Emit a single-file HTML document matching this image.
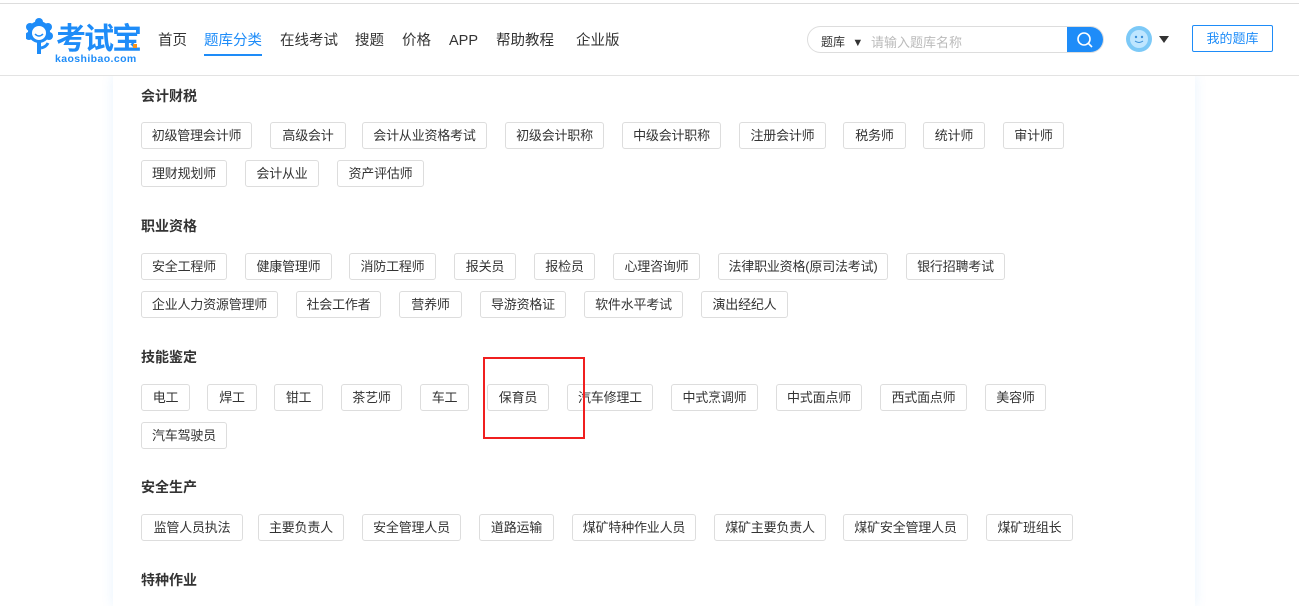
<!DOCTYPE html>
<html><head><meta charset="utf-8"><style>
*{margin:0;padding:0;box-sizing:border-box}
body{width:1299px;height:601px;overflow:hidden;background:#fff;font-family:"Liberation Sans","Noto Sans CJK SC",sans-serif;color:#333;position:relative}
.top{position:absolute;top:3px;left:0;width:1299px;height:1px;background:#ddd}
.hdr{position:absolute;top:4px;left:0;width:1299px;height:72px;border-bottom:1px solid #e3e3e3;background:#fff;z-index:2}
.nav span{position:absolute;top:29px;font-size:14.5px;line-height:17px;color:#333;white-space:nowrap}
.nav .on{color:#1e8cf8;border-bottom:2px solid #1e8cf8;padding-bottom:4px}
.search{position:absolute;left:807px;top:22px;width:297px;height:27px;border:1px solid #ddd;border-radius:14px;overflow:hidden;font-size:12px}
.search .b{position:absolute;right:0;top:0;width:36px;height:27px;background:#1e8cf8}
.card{position:absolute;left:113px;top:76px;width:1082px;height:530px;background:#fff;box-shadow:0 0 12px rgba(30,140,248,.10)}
h3{position:absolute;left:141px;font-size:14px;font-weight:bold;line-height:16px;color:#333}
.t{position:absolute;height:27px;line-height:25px;border:1px solid #ddd;border-radius:3px;font-size:13px;color:#333;white-space:nowrap;text-align:center;letter-spacing:-.2px}
.red{position:absolute;left:483px;top:357px;width:102px;height:82px;border:2px solid #f01f1f;z-index:5}
</style></head><body>
<div class="top"></div>
<div class="hdr">
 <svg style="position:absolute;left:26px;top:14px" width="114" height="46" viewBox="0 0 114 46">
  <g fill="#1e8cf8"><circle cx="13" cy="14" r="11"/><circle cx="4" cy="9" r="4"/><circle cx="22" cy="9" r="4"/><circle cx="13" cy="4" r="4"/><circle cx="3" cy="18" r="4"/><circle cx="23" cy="18" r="4"/><rect x="11" y="23" width="4" height="13"/><path d="M15 30 q5 -1 7 -5" stroke="#1e8cf8" stroke-width="3" fill="none"/></g>
  <circle cx="13" cy="15" r="7" fill="#fff"/><path d="M9 16 q4 4 8 0" stroke="#1e8cf8" stroke-width="1.5" fill="none"/>
  <text x="30" y="31" font-size="30" font-weight="bold" fill="#1e8cf8" font-family="Noto Sans CJK SC,sans-serif" letter-spacing="-2">考试宝</text>
  <rect x="107" y="26" width="4" height="4" fill="#f7931e"/>
  <text x="29" y="44" font-size="10.5" font-weight="bold" fill="#1e8cf8" font-family="Liberation Sans,sans-serif" letter-spacing=".4">kaoshibao.com</text>
 </svg>
 <div class="nav"><span style="left:158px">首页</span><span class="on" style="left:204px">题库分类</span><span style="left:280px">在线考试</span><span style="left:355px">搜题</span><span style="left:402px">价格</span><span style="left:449px">APP</span><span style="left:496px">帮助教程</span><span style="left:576px">企业版</span></div>
 <div class="search"><span style="position:absolute;left:13px;top:6px;color:#333">题库 <span style="font-size:11px;margin-left:4px">▼</span></span><span style="position:absolute;left:63px;top:5px;color:#bbb;font-size:13px">请输入题库名称</span>
  <div class="b"><svg width="36" height="27"><circle cx="17" cy="12" r="6" stroke="#fff" stroke-width="1.6" fill="none"/><path d="M21 16l4 4" stroke="#fff" stroke-width="1.6"/></svg></div></div>
 <svg style="position:absolute;left:1126px;top:22px" width="50" height="28"><circle cx="13" cy="13" r="13" fill="#7cc9f7"/><circle cx="13" cy="13" r="9" fill="#bfe6ff"/><circle cx="10" cy="11" r="1.2" fill="#3a8fd8"/><circle cx="16" cy="11" r="1.2" fill="#3a8fd8"/><path d="M9 15q4 3 8 0" stroke="#3a8fd8" fill="none"/><path d="M33 10h10l-5 7z" fill="#333"/></svg>
 <div style="position:absolute;left:1192px;top:21px;width:81px;height:27px;border:1px solid #1e8cf8;border-radius:2px;color:#1e8cf8;font-size:13px;line-height:25px;text-align:center">我的题库</div>
</div>
<div class="card"></div>

<h3 style="top:88px">会计财税</h3>
<div class="t" style="left:141px;top:122px;width:111px">初级管理会计师</div>
<div class="t" style="left:270px;top:122px;width:76px">高级会计</div>
<div class="t" style="left:362px;top:122px;width:125px">会计从业资格考试</div>
<div class="t" style="left:505px;top:122px;width:99px">初级会计职称</div>
<div class="t" style="left:622px;top:122px;width:99px">中级会计职称</div>
<div class="t" style="left:739px;top:122px;width:87px">注册会计师</div>
<div class="t" style="left:843px;top:122px;width:63px">税务师</div>
<div class="t" style="left:923px;top:122px;width:62px">统计师</div>
<div class="t" style="left:1003px;top:122px;width:61px">审计师</div>
<div class="t" style="left:141px;top:160px;width:86px">理财规划师</div>
<div class="t" style="left:245px;top:160px;width:74px">会计从业</div>
<div class="t" style="left:337px;top:160px;width:87px">资产评估师</div>

<h3 style="top:218px">职业资格</h3>
<div class="t" style="left:141px;top:253px;width:86px">安全工程师</div>
<div class="t" style="left:245px;top:253px;width:87px">健康管理师</div>
<div class="t" style="left:349px;top:253px;width:87px">消防工程师</div>
<div class="t" style="left:454px;top:253px;width:62px">报关员</div>
<div class="t" style="left:534px;top:253px;width:61px">报检员</div>
<div class="t" style="left:613px;top:253px;width:87px">心理咨询师</div>
<div class="t" style="left:718px;top:253px;width:170px">法律职业资格(原司法考试)</div>
<div class="t" style="left:906px;top:253px;width:99px">银行招聘考试</div>
<div class="t" style="left:141px;top:291px;width:137px">企业人力资源管理师</div>
<div class="t" style="left:296px;top:291px;width:85px">社会工作者</div>
<div class="t" style="left:399px;top:291px;width:63px">营养师</div>
<div class="t" style="left:480px;top:291px;width:86px">导游资格证</div>
<div class="t" style="left:584px;top:291px;width:99px">软件水平考试</div>
<div class="t" style="left:701px;top:291px;width:87px">演出经纪人</div>

<h3 style="top:349px">技能鉴定</h3>
<div class="t" style="left:141px;top:384px;width:49px">电工</div>
<div class="t" style="left:207px;top:384px;width:50px">焊工</div>
<div class="t" style="left:274px;top:384px;width:49px">钳工</div>
<div class="t" style="left:341px;top:384px;width:61px">茶艺师</div>
<div class="t" style="left:420px;top:384px;width:49px">车工</div>
<div class="t" style="left:487px;top:384px;width:62px">保育员</div>
<div class="t" style="left:567px;top:384px;width:86px">汽车修理工</div>
<div class="t" style="left:671px;top:384px;width:87px">中式烹调师</div>
<div class="t" style="left:776px;top:384px;width:86px">中式面点师</div>
<div class="t" style="left:880px;top:384px;width:87px">西式面点师</div>
<div class="t" style="left:985px;top:384px;width:61px">美容师</div>
<div class="t" style="left:141px;top:422px;width:86px">汽车驾驶员</div>

<h3 style="top:479px">安全生产</h3>
<div class="t" style="left:141px;top:514px;width:102px">监管人员执法</div>
<div class="t" style="left:258px;top:514px;width:86px">主要负责人</div>
<div class="t" style="left:362px;top:514px;width:99px">安全管理人员</div>
<div class="t" style="left:479px;top:514px;width:75px">道路运输</div>
<div class="t" style="left:572px;top:514px;width:124px">煤矿特种作业人员</div>
<div class="t" style="left:714px;top:514px;width:112px">煤矿主要负责人</div>
<div class="t" style="left:843px;top:514px;width:125px">煤矿安全管理人员</div>
<div class="t" style="left:986px;top:514px;width:87px">煤矿班组长</div>

<h3 style="top:572px">特种作业</h3>
<div class="red"></div>
</body></html>
